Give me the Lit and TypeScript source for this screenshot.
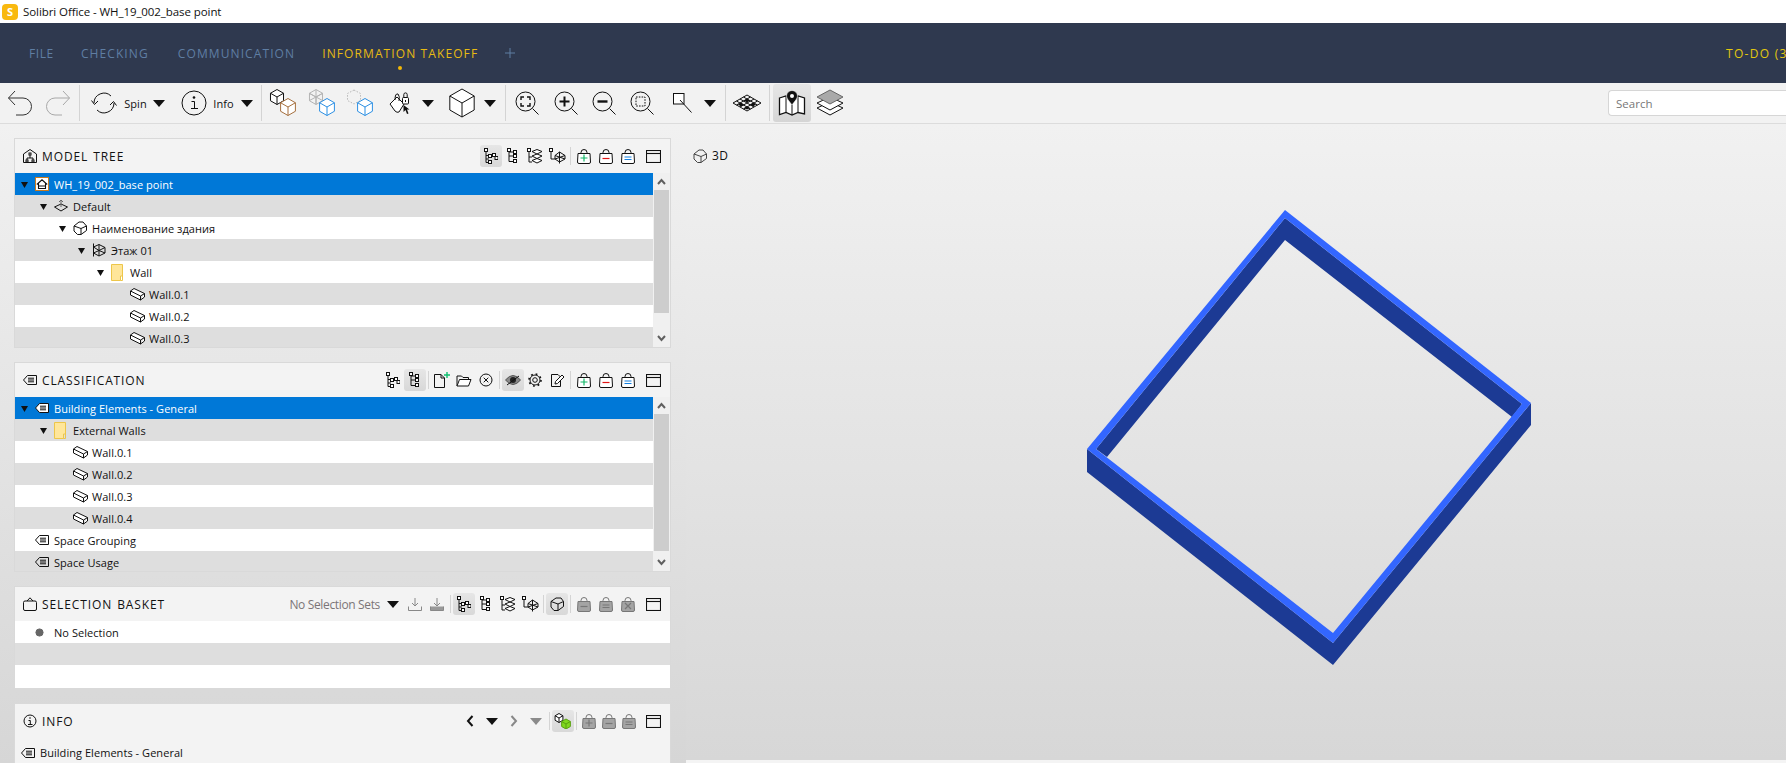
import { LitElement, css, html, svg } from "lit";
import { customElement } from "lit/decorators.js";

const icon = (w: number, h: number, body: unknown) =>
  html`<svg width=${w} height=${h} viewBox="0 0 ${w} ${h}" fill="none" stroke="#111" stroke-width="1">${body}</svg>`;

// isometric cube, r is the distance from centre to corner
const cube = (cx: number, cy: number, r: number, color = "#111", fill = "#fff") => {
  const dx = r * 0.87;
  const dy = r * 0.5;
  return svg`<g stroke=${color} fill=${fill}>
    <path d="M${cx} ${cy - r}L${cx + dx} ${cy - dy}V${cy + dy}L${cx} ${cy + r}L${cx - dx} ${cy + dy}V${cy - dy}Z"/>
    <path d="M${cx - dx} ${cy - dy}L${cx} ${cy}L${cx + dx} ${cy - dy}M${cx} ${cy}V${cy + r}" fill="none"/>
  </g>`;
};

const caret = (color = "#111") =>
  icon(12, 7, svg`<path d="M0 0H12L6 7Z" fill=${color} stroke="none"/>`);
const tri = () => icon(7, 7, svg`<path d="M0 1H7L3.5 7Z" fill="#111" stroke="none"/>`);

const undoPath = "M8 1L1.5 8L8 15M1.5 8H16A8.5 8.5 0 0 1 16 25H9";
const undo = () => icon(26, 26, svg`<path d=${undoPath} stroke="#333"/>`);
const redo = () =>
  icon(26, 26, svg`<g transform="translate(26 0) scale(-1 1)"><path d=${undoPath} stroke="#a8a8a8"/></g>`);
const spin = () =>
  icon(26, 26, svg`<path d="M3 13A10 10 0 0 1 20 6M23 13A10 10 0 0 1 6 20"/>
    <path d="M0.5 10.5L3.5 14.5L7 11M25.5 15.5L22.5 11.5L19 15"/>`);
const infoBig = () =>
  icon(26, 26, svg`<circle cx="13" cy="13" r="12"/><circle cx="13" cy="7.5" r="1.3" fill="#111" stroke="none"/>
    <path d="M10.5 11.5H13.5V18.5M10 18.5H17"/>`);

const cubes1 = () => icon(30, 28, svg`${cube(9, 8, 7.5)}${cube(20, 18, 8.5, "#a56f3e")}`);
const cubes2 = () =>
  icon(30, 28, svg`${cube(9, 8, 7.5, "#b4b4b4", "none")}
    <path d="M2.5 4.5L15.5 11.5M15.5 4.5L2.5 11.5M9 1V15" stroke="#b4b4b4"/>${cube(20, 18, 8.5, "#2b8fe3")}`);
const cubes3 = () =>
  icon(30, 28, svg`<path d="M9 1L15.5 4.5V11.5L9 15L2.5 11.5V4.5Z" stroke="#b8b8b8" stroke-dasharray="1.5 1.5"/>${cube(20, 18, 8.5, "#2b8fe3")}`);
const paint = () =>
  icon(22, 24, svg`<path d="M1 13L8 6L15 13L10 21Q8 22 6 20Z" fill="#fff"/>
    <path d="M6 9Q6 2 9 3Q11 5 10 10"/>
    <rect x="13.5" y="6.5" width="6" height="6.5" rx="1" fill="#fff"/>
    <path d="M14.8 6.5V3.6A1.7 1.7 0 0 1 18.2 3.6V6.5"/>
    <path d="M16.5 9V11"/>
    <path d="M14.5 14L14.5 21L16.5 19L18 23L19.5 22.5L18 18.5L20.5 18.5Z" fill="#111" stroke="none"/>`);
const zoomBase = (inner: unknown) =>
  icon(24, 24, svg`<circle cx="10.5" cy="10.5" r="9.5"/><path d="M17.5 17.5L23.5 23.5"/>${inner}`);
const zoomFit = () =>
  zoomBase(svg`<path d="M6 9V6H9M12 6H15V9M15 12V15H12M9 15H6V12" stroke-width="1.4"/>`);
const zoomIn = () => zoomBase(svg`<path d="M5.5 10.5H15.5M10.5 5.5V15.5" stroke-width="2"/>`);
const zoomOut = () => zoomBase(svg`<path d="M5.5 10.5H15.5" stroke-width="2.4"/>`);
const zoomArea = () =>
  zoomBase(svg`<rect x="6" y="6" width="9" height="9" stroke-dasharray="1.6 1.2"/>`);
const boxSel = () =>
  icon(20, 22, svg`<rect x="1.5" y="1.5" width="10.5" height="10.5" fill="#fff"/><path d="M8 8L19.5 20.5"/>`);
const grid = () =>
  icon(30, 18, svg`<path d="M15 1L29 9L15 17L1 9Z"/>
    <path d="M8 5L22 13M11.5 3L25.5 11M4.5 7L18.5 15M22 5L8 13M18.5 3L4.5 11M25.5 7L11.5 15"/>
    <path d="M15 4.5L18 6.5L15 8.5L12 6.5ZM21 8.5L24 10.5L21 12.5L18 10.5ZM9 8.5L12 10.5L9 12.5L6 10.5ZM15 12L18 14L15 15.5L12 14Z" fill="#111" stroke="none"/>`);
const mapIc = () =>
  icon(28, 26, svg`<path d="M1.5 8L8 6L14 8.5L20 6L26.5 8V24L20 22.5L14 25L8 22.5L1.5 24.5Z" stroke-width="1.3" fill="#fff"/>
    <path d="M8 6V22.5M20 6V22.5M14 14V25"/>
    <path d="M14 15C11 11 8.5 8.5 8.5 6A5.5 5.5 0 0 1 19.5 6C19.5 8.5 17 11 14 15Z" fill="#111" stroke="#fff" stroke-width=".6"/>
    <circle cx="14" cy="6" r="2" fill="#fff" stroke="none"/>`);
const layers = () =>
  icon(30, 28, svg`<path d="M15 13L28 19L15 26L2 19Z" fill="#fff"/><path d="M15 8L28 14L15 21L2 14Z" fill="#fff"/>
    <path d="M15 1L28 8L15 15L2 8Z" fill="#a9a9a9" stroke="#666"/>`);

// small panel tool icons
const node = (x: number, y: number) => svg`<rect x=${x} y=${y} width="3" height="3" fill="#fff"/>`;
const tree1 = () =>
  icon(14, 16, svg`<path d="M2 3V14.5H5M2 7.5H5M2 11H5M9 7.5H11"/>
    ${node(0.5, 0.5)}${node(4.5, 6.5)}${node(4.5, 12.5)}${node(8.5, 5.5)}${node(11, 8.5)}`);
const tree2 = () =>
  icon(12, 16, svg`<path d="M2 3V13.5H6M2 8H6M2 4H6"/>${node(0.5, 0.5)}${node(6.5, 2.5)}${node(6.5, 6.5)}${node(6.5, 11.5)}`);
const tree3 = () =>
  icon(16, 16, svg`<path d="M2 3V14H5M2 9H5"/>${node(0.5, 0.5)}
    <path d="M5 3.5L10 1.5L15 3.5L10 6ZM5 8L10 6L15 8L10 10.5ZM5 12.5L10 10.5L15 12.5L10 15Z" fill="#fff"/>`);
const tree4 = () =>
  icon(17, 16, svg`<path d="M2 3V11H6"/>${node(0.5, 0.5)}
    <path d="M10.5 4L16 7.5V11L10.5 14L6 11V7.5ZM6 7.5L16 11M16 7.5L6 11M10.5 4V15.5"/>`);
const bag = (sign: "plus" | "minus" | "eq" | "x", color: string, gray = false) => {
  const line = gray ? "#777" : "#111";
  const fill = gray ? "#a4a4a4" : "#fff";
  const mark = {
    plus: "M3.5 9H10.5M7 5.5V12.5",
    minus: "M3.5 9.5H10.5",
    eq: "M3.5 8H10.5M3.5 10.5H10.5",
    x: "M4 6L10 12M10 6L4 12",
  }[sign];
  return icon(14, 15, svg`<path d="M4 4V3.5A3 3 0 0 1 10 3.5V4" stroke=${line}/>
    <path d="M1 4.5H13L13.5 13A1.5 1.5 0 0 1 12 14.5H2A1.5 1.5 0 0 1 .5 13Z" stroke=${line} fill=${fill}/>
    <path d=${mark} stroke=${color} stroke-width="1.2"/>`);
};
const bags = () => [
  bag("plus", "#14b86a"),
  bag("minus", "#e01515"),
  bag("eq", "#1480e0"),
];
const windowIc = () =>
  icon(15, 13, svg`<rect x=".5" y=".5" width="14" height="12" stroke-width="1.1"/><path d="M.5 3.5H14.5" stroke-width="1.1"/>`);
const newDoc = () =>
  icon(18, 17, svg`<path d="M1.5 2.5H8L11.5 6V15.5H1.5Z"/><path d="M8 2.5V6H11.5"/>
    <path d="M14 0V6M11 3H17" stroke="#10c070" stroke-width="1.4"/>`);
const folderOpen = () =>
  icon(16, 13, svg`<path d="M1 12V2H5.5L7 3.5H12.5V5.5"/><path d="M1 12L3.5 5.5H15L12.5 12Z" fill="#fff"/>`);
const closeCircle = () =>
  icon(14, 14, svg`<circle cx="7" cy="7" r="6"/><path d="M4.7 4.7L9.3 9.3M9.3 4.7L4.7 9.3"/>`);
const eye = () =>
  icon(16, 12, svg`<path d="M.5 6Q8 -3 15.5 6Q8 15 .5 6Z" fill="#888" stroke="#555"/><circle cx="8" cy="6" r="3" fill="#222" stroke="none"/>
    <path d="M2 11L14 2" stroke="#111"/>`);
const gear = () =>
  icon(14, 14, svg`<circle cx="7" cy="7" r="2.3"/><circle cx="7" cy="7" r="5"/>
    <circle cx="7" cy="7" r="6" stroke-dasharray="1.8 2.9" stroke-width="1.6"/>`);
const editIc = () =>
  icon(15, 15, svg`<path d="M1.5 1.5H8L10.5 4V13.5H1.5Z"/><path d="M5 11L5.5 8.5L12 2L14 4L7.5 10.5Z" fill="#fff"/>`);
const download = (dots = false) =>
  icon(14, 13, svg`<path d="M7 0V8M4 5L7 8L10 5" stroke="#888"/>
    <path d="M.5 8.5V12.5H13.5V8.5" stroke="#888" fill=${dots ? "#999" : "none"}/>`);
const cubeOutline = () =>
  icon(14, 14, svg`<path d="M1 4.5L6 1H11L13.5 4.5V9.5L8 13.5H4L1 10Z"/><path d="M1 4.5L8 7V13.5M8 7L13.5 4.5"/>`);
const greenCube = () =>
  icon(18, 16, svg`${cube(5, 5, 4.5)}${cube(12, 11, 5, "#5aa010", "#7fd81c")}`);

// tree icons
const tag = (color = "#111", fill = "none") =>
  icon(14, 10, svg`<path d="M13.5 .5V9.5H4.5L.5 5L4.5 .5Z" stroke=${color} fill=${fill}/>
    <path d="M5 3.2H11M5 5H11M5 6.8H11" stroke=${color}/>`);
const project = () =>
  icon(14, 14, svg`<rect x=".5" y=".5" width="13" height="13" fill="#fff" stroke="#c87a1e"/>
    <path d="M1.8 7.5L7 2.8L12.2 7.5M3.5 6.5V11.5H10.5V6.5M3.5 9H10.5" stroke="#111" stroke-width="1.1"/>`);
const siteIc = () =>
  icon(14, 12, svg`<path d="M.5 7L7 4L13.5 7L7 11Z"/><path d="M7 0V7M5 2L7 0L9 2" stroke="#666"/>`);
const buildingIc = () => icon(14, 14, svg`<path d="M1 5L6 1H10L13.5 5V9.5L8 13.5H4.5L1 10Z"/><path d="M1 5L8 7.5V13.5M8 7.5L13.5 5"/>`);
const floorIc = () =>
  icon(14, 14, svg`<path d="M1.5 .5V13.5M1.5 4L7 1.5L13 4.5L7 7.5ZM1.5 10L7 7.5L13 10L7 13ZM7 1.5V13M13 4.5V10"/>`);
const folder = () =>
  icon(12, 17, svg`<path d="M.5 .5H11.5V12H9.5V16.5H.5Z" fill="#ffe69a" stroke="#edc64a"/><path d="M11.5 12V16.5H9.5" stroke="#edc64a"/>`);
const wallIc = () =>
  icon(15, 13, svg`<path d="M.5 3L4 .5L14.5 5.5L10.5 8ZM.5 3V7L10.5 12V8M14.5 5.5V9L10.5 12" fill="#fff"/>`);
const basketIc = () =>
  icon(14, 14, svg`<path d="M4 4L7 .8L10 4"/><rect x=".5" y="4" width="13" height="9.5" rx="1.5"/>`);
const modelIc = () =>
  icon(14, 14, svg`<path d="M.5 13.5V5L7 .5L13.5 5V13.5Z"/>
    <path d="M7 6V9M4 11V9H10V11"/><rect x="6" y="4" width="2" height="2"/><rect x="3" y="11" width="2" height="2"/><rect x="9" y="11" width="2" height="2"/>`);
const infoSmall = () =>
  icon(14, 14, svg`<circle cx="7" cy="7" r="6"/><circle cx="7" cy="4" r=".8" fill="#111" stroke="none"/><path d="M5.5 6.5H7.3V10.5M5 10.5H9.5"/>`);
const bullet = () =>
  icon(9, 9, svg`<circle cx="4.5" cy="4.5" r="3.6" fill="#666" stroke="#666"/>`);

interface Row {
  level?: number;
  open?: boolean;
  ic?: unknown;
  text?: string;
}

const modelRows: Row[] = [
  { level: 0, open: true, ic: project(), text: "WH_19_002_base point" },
  { level: 1, open: true, ic: siteIc(), text: "Default" },
  { level: 2, open: true, ic: buildingIc(), text: "Наименование здания" },
  { level: 3, open: true, ic: floorIc(), text: "Этаж 01" },
  { level: 4, open: true, ic: folder(), text: "Wall" },
  { level: 5, ic: wallIc(), text: "Wall.0.1" },
  { level: 5, ic: wallIc(), text: "Wall.0.2" },
  { level: 5, ic: wallIc(), text: "Wall.0.3" },
];

const classRows: Row[] = [
  { level: 0, open: true, ic: tag("#111", "#fff"), text: "Building Elements - General" },
  { level: 1, open: true, ic: folder(), text: "External Walls" },
  { level: 2, ic: wallIc(), text: "Wall.0.1" },
  { level: 2, ic: wallIc(), text: "Wall.0.2" },
  { level: 2, ic: wallIc(), text: "Wall.0.3" },
  { level: 2, ic: wallIc(), text: "Wall.0.4" },
  { level: 0, ic: tag(), text: "Space Grouping" },
  { level: 0, ic: tag(), text: "Space Usage" },
];

@customElement("app-root")
export class AppRoot extends LitElement {
  static styles = css`
    :host {
      display: block;
      width: 1786px;
      height: 763px;
      overflow: hidden;
      font-family: "Open Sans", "Noto Sans", sans-serif;
      font-size: 11px;
      letter-spacing: 0.05px;
      color: #111;
      background: #fff;
    }
    .title {
      height: 23px;
      display: flex;
      align-items: center;
      padding-left: 2px;
      background: #fff;
      font-size: 11.5px;
      letter-spacing: -0.08px;
    }
    .logo {
      width: 16px;
      height: 16px;
      margin-right: 5px;
      border-radius: 4px;
      background: #f9b90f;
      color: #fff;
      font-weight: 700;
      font-size: 11px;
      line-height: 16px;
      text-align: center;
    }
    .nav {
      height: 60px;
      display: flex;
      align-items: center;
      padding-left: 29px;
      background: #2f394f;
      color: #5f7ea3;
      font-size: 12px;
      letter-spacing: 1.1px;
      white-space: nowrap;
    }
    .tab {
      margin-right: 27px;
      position: relative;
    }
    .tab.file {
      letter-spacing: 0.6px;
    }
    .tab.checking {
      margin-right: 29px;
    }
    .tab.active {
      color: #e8bb12;
    }
    .tab.active::after {
      content: "";
      position: absolute;
      left: 50%;
      top: 21px;
      width: 4px;
      height: 4px;
      margin-left: -2px;
      border-radius: 50%;
      background: #f2b705;
    }
    .todo {
      flex: none;
      margin-left: auto;
      width: 60px;
      color: #e3c80e;
      letter-spacing: 1.3px;
    }
    .toolbar {
      height: 40px;
      display: flex;
      align-items: center;
      background: #f2f2f2;
      border-bottom: 1px solid #dcdcdc;
      box-sizing: content-box;
    }
    .cell {
      flex: none;
      display: flex;
      align-items: center;
      justify-content: center;
      white-space: nowrap;
    }
    .tsep {
      flex: none;
      width: 4px;
      height: 36px;
      display: flex;
      justify-content: center;
    }
    .tsep::before,
    .psep::before {
      content: "";
      width: 1px;
      background: #d4d4d4;
    }
    .active-tile {
      height: 38px;
      border-radius: 3px;
      background: linear-gradient(#e6e6e6, #d5d5d5);
    }
    .search {
      margin-left: auto;
      width: 178px;
      height: 26px;
      box-sizing: border-box;
      padding-left: 7px;
      display: flex;
      align-items: center;
      background: #fff;
      border: 1px solid #d6d6d6;
      border-right: none;
      border-radius: 4px 0 0 4px;
      color: #777;
      font-size: 11.5px;
    }
    .main {
      height: 639px;
      display: flex;
      background: linear-gradient(#f1f1f1, #d6d6d6);
    }
    .side {
      flex: none;
      width: 657px;
      margin-left: 14px;
      padding-top: 14px;
      display: flex;
      flex-direction: column;
      gap: 14px;
    }
    .panel {
      flex: none;
      box-sizing: border-box;
      display: flex;
      flex-direction: column;
      border: 1px solid #d9d9d9;
      background: #f3f3f3;
      overflow: hidden;
    }
    .h210 {
      height: 210px;
    }
    .h103 {
      height: 103px;
    }
    .hrest {
      flex: 1;
      border-bottom: none;
    }
    .phead {
      flex: none;
      height: 34px;
      display: flex;
      align-items: center;
      padding: 0 6px 0 8px;
      box-sizing: border-box;
    }
    .ptitle {
      margin-left: 5px;
      font-size: 12px;
      letter-spacing: 0.9px;
      word-spacing: 1px;
      margin-right: auto;
    }
    .tools {
      display: flex;
      align-items: center;
      height: 34px;
    }
    .tools .cell {
      height: 22px;
    }
    .tools .on {
      border-radius: 3px;
      background: linear-gradient(#e6e6e6, #d8d8d8);
    }
    .psep {
      flex: none;
      width: 5px;
      height: 18px;
      display: flex;
      justify-content: center;
    }
    .win {
      margin-left: 3px;
    }
    .sets {
      color: #7b7577;
      font-size: 12px;
      letter-spacing: -0.35px;
      margin-right: 2px;
    }
    .pbody {
      flex: 1;
      display: flex;
      min-height: 0;
    }
    .rows {
      flex: 1;
      min-width: 0;
      overflow: hidden;
    }
    .row {
      height: 22px;
      display: flex;
      align-items: center;
      box-sizing: border-box;
      background: #fff;
      white-space: nowrap;
    }
    .row.odd {
      background: #dedede;
    }
    .row.sel {
      background: #0078d7;
      color: #fff;
    }
    .row.tall {
      height: 23px;
    }
    .tw {
      flex: none;
      width: 18px;
      display: flex;
      justify-content: center;
    }
    .ri {
      flex: none;
      width: 19px;
      padding-left: 2px;
      display: flex;
      align-items: center;
    }
    .scroll {
      flex: none;
      width: 17px;
      display: flex;
      flex-direction: column;
      align-items: center;
      background: #f0f0f0;
    }
    .arrow {
      flex: none;
      height: 17px;
      display: flex;
      align-items: center;
      justify-content: center;
    }
    .thumb {
      flex: none;
      width: 15px;
      background: #cdcdcd;
    }
    .grow {
      flex: 1;
    }
    .infoline {
      display: flex;
      align-items: center;
      height: 22px;
      padding-left: 6px;
      margin-top: 4px;
      white-space: nowrap;
    }
    .infoline svg {
      margin-right: 5px;
    }
    .view {
      flex: 1;
      margin-left: 15px;
      position: relative;
      background: linear-gradient(#f1f1f1, #d7d7d7) 0 0 / 100% 636px no-repeat, #f4f4f4;
    }
    .scene {
      position: absolute;
      left: 0;
      top: 0;
    }
    .label {
      position: relative;
      padding: 23px 0 0 7px;
      display: flex;
      align-items: center;
      gap: 5px;
      font-size: 12px;
      letter-spacing: 0.4px;
    }
  `;

  private cell(content: unknown, w = 22, cls = "") {
    return html`<div class="cell ${cls}" style="width:${w}px">${content}</div>`;
  }

  private gap(w: number) {
    return html`<div class="cell" style="width:${w}px"></div>`;
  }

  private renderToolbar() {
    const sep = html`<div class="tsep"></div>`;
    return html`<div class="toolbar">
      ${this.cell(undo(), 39)}${this.cell(redo(), 38)}${sep}
      ${this.gap(10)}${this.cell(spin(), 26)}${this.gap(7)}${this.cell("Spin", 23)}${this.cell(caret(), 24)}
      ${this.gap(10)}${this.cell(infoBig(), 26)}${this.gap(6)}${this.cell("Info", 21)}${this.cell(caret(), 25)}${sep}
      ${this.cell(cubes1(), 40)}${this.cell(cubes2(), 38)}${this.cell(cubes3(), 38)}
      ${this.cell(paint(), 42)}${this.cell(caret(), 14)}${this.gap(13)}
      ${this.cell(icon(28, 30, cube(14, 15, 14)), 28)}${this.cell(caret(), 27)}${sep}
      ${this.cell(zoomFit(), 40)}${this.cell(zoomIn(), 38)}${this.cell(zoomOut(), 38)}${this.cell(zoomArea(), 38)}
      ${this.cell(boxSel(), 42)}${this.cell(caret(), 14)}${this.gap(6)}${sep}
      ${this.cell(grid(), 40)}${sep}${this.gap(2)}
      ${this.cell(mapIc(), 38, "active-tile")}${this.cell(layers(), 38)}
      <div class="search">Search</div>
    </div>`;
  }

  private rows(rows: Row[], sel: boolean) {
    return rows.map(
      (r, i) => html`<div
        class="row ${i % 2 ? "odd" : ""} ${sel && i === 0 ? "sel" : ""}"
        style="padding-left:${(r.level ?? 0) * 19}px"
      >
        <span class="tw">${r.open ? tri() : ""}</span><span class="ri">${r.ic}</span>${r.text}
      </div>`
    );
  }

  private scrollbar(thumb: number) {
    const chev = (d: string) =>
      icon(9, 7, svg`<path d=${d} stroke="#606060" stroke-width="2"/>`);
    return html`<div class="scroll">
      <div class="arrow">${chev("M1 6L4.5 2L8 6")}</div>
      <div class="thumb" style="height:${thumb}px"></div>
      <div class="grow"></div>
      <div class="arrow">${chev("M1 1L4.5 5L8 1")}</div>
    </div>`;
  }

  private win() {
    return this.cell(windowIc(), 22, "win");
  }

  private renderPanels() {
    const psep = html`<div class="psep"></div>`;
    const wall = svg`
      <path fill="#1c3a94" d="M1096 449L1285 218L1522 404L1512 417L1285 240L1107 457Z"/>
      <path fill="#1c3a94" d="M1087 449L1333 643L1531 403V425L1333 665L1087 472Z"/>
      <path fill="#3366ff" fill-rule="evenodd" d="M1285 210L1531 403L1333 643L1087 449ZM1285 218L1096 449L1333 633L1522 404Z"/>`;
    return html`<div class="main">
      <div class="side">
        <div class="panel h210">
          <div class="phead">
            ${modelIc()}<span class="ptitle">MODEL TREE</span>
            <div class="tools">
              ${this.cell(tree1(), 22, "on")}${this.cell(tree2())}${this.cell(tree3())}${this.cell(tree4())}${psep}
              ${bags().map((b) => this.cell(b))}${this.win()}
            </div>
          </div>
          <div class="pbody"><div class="rows">${this.rows(modelRows, true)}</div>${this.scrollbar(123)}</div>
        </div>
        <div class="panel h210">
          <div class="phead">
            ${tag()}<span class="ptitle">CLASSIFICATION</span>
            <div class="tools">
              ${this.cell(tree1())}${this.cell(tree2(), 22, "on")}${psep}
              ${this.cell(newDoc())}${this.cell(folderOpen())}${this.cell(closeCircle())}${psep}
              ${this.cell(eye(), 22, "on")}${this.cell(gear())}${this.cell(editIc())}${psep}
              ${bags().map((b) => this.cell(b))}${this.win()}
            </div>
          </div>
          <div class="pbody"><div class="rows">${this.rows(classRows, true)}</div>${this.scrollbar(137)}</div>
        </div>
        <div class="panel h103">
          <div class="phead">
            ${basketIc()}<span class="ptitle">SELECTION BASKET</span>
            <div class="tools">
              <span class="sets">No Selection Sets</span>${this.cell(caret())}
              ${this.cell(download())}${this.cell(download(true))}${psep}
              ${this.cell(tree1(), 22, "on")}${this.cell(tree2())}${this.cell(tree3())}${this.cell(tree4())}${psep}
              ${this.cell(cubeOutline(), 22, "on")}${psep}
              ${this.cell(bag("minus", "#777", true))}${this.cell(bag("eq", "#777", true))}${this.cell(bag("x", "#777", true))}${this.win()}
            </div>
          </div>
          <div class="rows">
            <div class="row"><span class="tw"></span><span class="ri">${bullet()}</span>No Selection</div>
            <div class="row odd"></div>
            <div class="row tall"></div>
          </div>
        </div>
        <div class="panel hrest">
          <div class="phead">
            ${infoSmall()}<span class="ptitle">INFO</span>
            <div class="tools">
              ${this.cell(icon(8, 12, svg`<path d="M6.5 1L2 6L6.5 11" stroke-width="2"/>`), 22)}
              ${this.cell(caret())}
              ${this.cell(icon(8, 12, svg`<path d="M1.5 1L6 6L1.5 11" stroke="#888" stroke-width="2"/>`))}
              ${this.cell(caret("#8a8a8a"))}${psep}
              ${this.cell(greenCube(), 22, "on")}${psep}
              ${this.cell(bag("plus", "#777", true), 20)}${this.cell(bag("minus", "#777", true), 20)}${this.cell(bag("eq", "#777", true), 20)}${this.win()}
            </div>
          </div>
          <div class="infoline">${tag()}Building Elements - General</div>
        </div>
      </div>
      <div class="view">
        <svg class="scene" width="1100" height="636" viewBox="686 124 1100 636">${wall}</svg>
        <div class="label">${icon(14, 14, svg`<path d="M1 5L6 1H10L13.5 5V9.5L8 13.5H4.5L1 10Z" stroke="#444"/><path d="M1 5L8 7.5V13.5M8 7.5L13.5 5" stroke="#444"/>`)}3D</div>
      </div>
    </div>`;
  }

  render() {
    return html`
      <div class="title"><span class="logo">S</span>Solibri Office - WH_19_002_base point</div>
      <div class="nav">
        <span class="tab file">FILE</span>
        <span class="tab checking">CHECKING</span>
        <span class="tab">COMMUNICATION</span>
        <span class="tab active">INFORMATION TAKEOFF</span>
        ${icon(10, 10, svg`<path d="M5 0V10M0 5H10" stroke="#5f7ea3"/>`)}
        <span class="todo">TO-DO (3</span>
      </div>
      ${this.renderToolbar()} ${this.renderPanels()}
    `;
  }
}
